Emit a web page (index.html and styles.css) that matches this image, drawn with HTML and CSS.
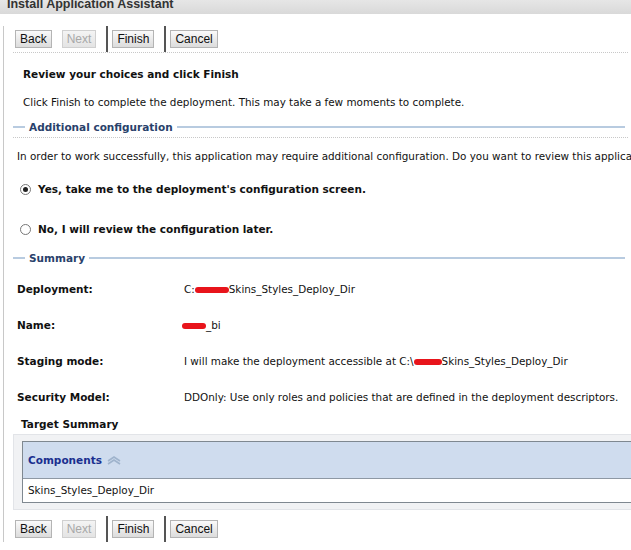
FILE: index.html
```html
<!DOCTYPE html>
<html lang="en">

<head>
    <meta charset="UTF-8" />
    <title>Install Application Assistant</title>
    <link rel="stylesheet" href="styles.css">
</head>

<body>

    <div class="titlebar">Install Application Assistant</div>

    <div class="panel">

        <div class="train">
            <button class="btn">Back</button>
            <button class="btn" disabled>Next</button>
            <span class="sep"></span>
            <button class="btn">Finish</button>
            <span class="sep"></span>
            <button class="btn">Cancel</button>
        </div>

        <div class="dotted"></div>

        <h3 class="review">Review your choices and click Finish</h3>
        <p class="intro">Click Finish to complete the deployment. This may take a few moments to complete.</p>

        <div class="section-head"><span>Additional configuration</span></div>
        <div class="dotted dotted-under"></div>

        <p class="question">In order to work successfully, this application may require additional configuration. Do you want to review this application's configuration after completing this assistant?</p>

        <label class="choice choice-yes"><span class="radio checked"></span>Yes, take me to the deployment's configuration screen.</label>
        <label class="choice choice-no"><span class="radio"></span>No, I will review the configuration later.</label>

        <div class="section-head summary-head"><span>Summary</span></div>

        <div class="summary">
            <div class="label">Deployment:</div>
            <div class="value">C:<span class="redact r1"></span>Skins_Styles_Deploy_Dir</div>
            <div class="label">Name:</div>
            <div class="value"><span class="redact r2"></span>_bi</div>
            <div class="label">Staging mode:</div>
            <div class="value">I will make the deployment accessible at C:\<span class="redact r3"></span>Skins_Styles_Deploy_Dir</div>
            <div class="label">Security Model:</div>
            <div class="value">DDOnly: Use only roles and policies that are defined in the deployment descriptors.</div>
        </div>

        <div class="target-title">Target Summary</div>
        <div class="target-box">
            <div class="target-table">
                <div class="target-header">
                    Components
                    <svg class="sort" width="14" height="9" viewBox="0 0 14 9">
                        <path d="M1 5 L7 1 L13 5" fill="none" stroke="#9fb3cc" stroke-width="1.6" />
                        <path d="M1 8 L7 4 L13 8" fill="none" stroke="#9fb3cc" stroke-width="1.6" />
                    </svg>
                </div>
                <div class="target-row">Skins_Styles_Deploy_Dir</div>
            </div>
        </div>

        <div class="train train-bottom">
            <button class="btn">Back</button>
            <button class="btn" disabled>Next</button>
            <span class="sep"></span>
            <button class="btn">Finish</button>
            <span class="sep"></span>
            <button class="btn">Cancel</button>
        </div>

    </div>

</body>

</html>
```

FILE: styles.css
```css
html, body {
    margin: 0;
    padding: 0;
    background-color: #fff;
}

body {
    width: 631px;
    height: 550px;
    overflow: hidden;
    font-family: "DejaVu Sans", Tahoma, sans-serif;
    font-size: 10.4px;
    color: #111;
}

.titlebar {
    height: 14px;
    line-height: 8px;
    padding-left: 7px;
    font-family: "Liberation Sans", Arial, sans-serif;
    font-size: 12.5px;
    font-weight: bold;
    color: #333;
    background: linear-gradient(#e6e6e6, #d9d9d9);
    overflow: hidden;
    white-space: nowrap;
}

.panel {
    margin-left: 3px;
    border-left: 1px solid #c8c8c8;
    padding-left: 9px;
    white-space: nowrap;
}

.train {
    display: flex;
    align-items: center;
    height: 26px;
    margin-top: 12px;
    padding-left: 2px;
}

.btn {
    height: 18px;
    padding: 0 4px;
    margin-right: 10px;
    font-family: "Liberation Sans", Arial, sans-serif;
    font-size: 12px;
    color: #111;
    border: 1px solid #b4b4b4;
    border-radius: 0;
    background: linear-gradient(#fafafa, #dcdcdc);
}

.btn[disabled] {
    color: #a8a8a8;
    border-color: #d0d0d0;
    background: linear-gradient(#f4f4f4, #e4e4e4);
}

.sep {
    width: 2px;
    height: 26px;
    margin-right: 4px;
    background-color: #555;
}

.dotted {
    height: 0;
    border-top: 1px dotted #c8c8c8;
    margin-right: 3px;
}

.dotted-under {
    margin-top: 3px;
}

.review {
    margin: 15px 0 0 10px;
    font-size: 10.5px;
    line-height: 12px;
}

.intro {
    margin: 16px 0 0 10px;
    line-height: 12px;
}

.section-head {
    display: flex;
    align-items: center;
    margin-top: 12px;
    height: 14px;
    margin-right: 6px;
    font-weight: bold;
    font-size: 10.5px;
    color: #29416b;
}

.section-head::before {
    content: "";
    width: 12px;
    height: 2px;
    margin-right: 4px;
    background-color: #b8cbe0;
}

.section-head::after {
    content: "";
    flex: 1;
    height: 2px;
    margin-left: 4px;
    background-color: #b8cbe0;
}

.question {
    margin: 12px 0 0 4px;
    line-height: 12px;
}

.choice {
    display: flex;
    align-items: center;
    margin-left: 7px;
    font-weight: bold;
    font-size: 10.5px;
    line-height: 12px;
}

.choice-yes {
    margin-top: 21px;
}

.choice-no {
    margin-top: 28px;
}

.radio {
    width: 9px;
    height: 9px;
    margin-right: 7px;
    border: 1px solid #777;
    border-radius: 50%;
    background-color: #fff;
    position: relative;
}

.radio.checked::after {
    content: "";
    position: absolute;
    left: 2px;
    top: 2px;
    width: 5px;
    height: 5px;
    border-radius: 50%;
    background-color: #222;
}

.summary-head {
    margin-top: 16px;
}

.summary {
    display: grid;
    grid-template-columns: 167px auto;
    grid-auto-rows: 36px;
    margin: 18px 0 0 4px;
    line-height: 12px;
}

.summary .label {
    font-weight: bold;
    font-size: 10.5px;
}

.redact {
    display: inline-block;
    height: 6px;
    vertical-align: middle;
    border-radius: 3px;
    background-color: #e8141b;
}

.r1 {
    width: 34px;
}

.r2 {
    width: 24px;
    margin-left: -2px;
}

.r3 {
    width: 28px;
}

.target-title {
    margin: -9px 0 0 8px;
    font-weight: bold;
    font-size: 10.5px;
    line-height: 12px;
}

.target-box {
    margin-top: 4px;
    padding: 6px 0 6px 8px;
    border: 1px solid #e2e4e8;
    border-right: none;
    background-color: #f1f2f4;
}

.target-table {
    border: 1px solid #7f8890;
    border-right: none;
    background-color: #fff;
}

.target-header {
    display: flex;
    align-items: center;
    height: 36px;
    padding-left: 5px;
    font-weight: bold;
    font-size: 10.5px;
    color: #1a2f8f;
    background-color: #cfdcee;
    border-bottom: 1px solid #8e98a4;
}

.sort {
    margin-left: 5px;
}

.target-row {
    height: 23px;
    line-height: 23px;
    padding-left: 5px;
}

.train-bottom {
    margin-top: 6px;
}
```
